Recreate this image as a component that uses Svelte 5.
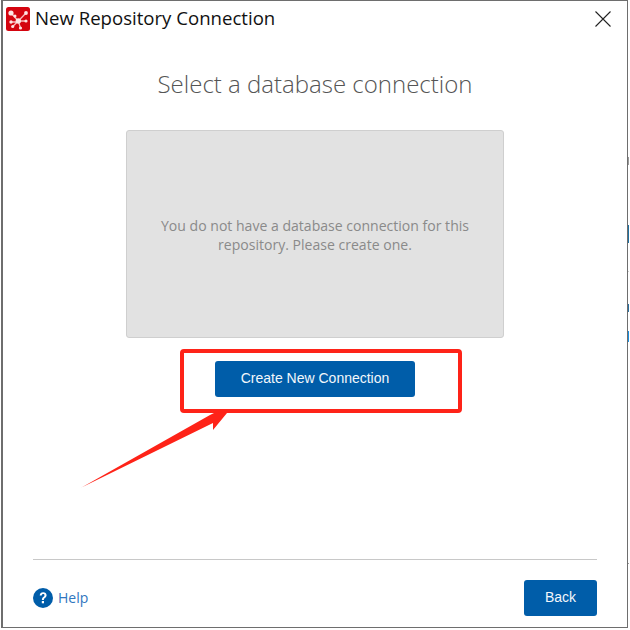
<script>
  const slivers = [
    { top: 157, height: 8, color: '#9a9a9a' },
    { top: 225, height: 18, color: '#1f6f9f' },
    { top: 271, height: 1, color: '#cccccc' },
    { top: 304, height: 8, color: '#2a6f9f' },
    { top: 331, height: 11, color: '#1a8fe0' },
    { top: 563, height: 1, color: '#999999' }
  ];
</script>

<div class="page">
  <div class="window">
    <header class="titlebar">
      <svg class="logo" viewBox="0 0 24 24" width="24" height="24" aria-hidden="true">
        <rect width="24" height="24" rx="2.5" fill="#d4040f" />
        <g stroke="#f8bcbc" stroke-width="1.3">
          <path d="M5 6 12.3 14M5 15H12.3M6.7 19.5 12.3 14M20 6 12.3 14M20 14H12.3M14.5 21 12.3 14" />
        </g>
        <g fill="#fde4e4">
          <circle cx="5" cy="6" r="2.6" />
          <circle cx="9" cy="9" r="1.5" />
          <circle cx="5" cy="15" r="1.7" />
          <circle cx="6.7" cy="19.5" r="1.6" />
          <circle cx="20" cy="6" r="1.9" />
          <circle cx="20" cy="14" r="1.6" />
          <circle cx="14.5" cy="21" r="1.6" />
          <circle cx="12.3" cy="14" r="2.7" />
        </g>
      </svg>
      <span class="title">New Repository Connection</span>
      <svg class="close" viewBox="0 0 16 16" width="16" height="16" aria-hidden="true">
        <path d="M.5.5 15.5 15.5M15.5.5.5 15.5" stroke="#222" stroke-width="1.1" fill="none" />
      </svg>
    </header>

    <main class="content">
      <h1>Select a database connection</h1>
      <div class="notice">
        <p>You do not have a database connection for this repository. Please create one.</p>
      </div>
      <button class="btn create">Create New Connection</button>
    </main>

    <footer class="footer">
      <a class="help" href="#help">
        <svg viewBox="0 0 20 20" width="20" height="20" aria-hidden="true">
          <circle cx="10" cy="10" r="10" fill="#005da9" />
          <path d="M6.7 7.6C6.8 5.5 8.2 4.3 10.2 4.3 12.2 4.3 13.6 5.5 13.6 7.2 13.6 8.5 12.9 9.2 11.9 9.9 11.1 10.5 10.9 10.9 10.9 11.9H8.9C8.9 10.4 9.3 9.7 10.3 9 11.1 8.4 11.5 8 11.5 7.3 11.5 6.5 11 6 10.2 6 9.3 6 8.8 6.6 8.7 7.6Z" fill="#fff" />
          <rect x="8.8" y="13" width="2.2" height="2.3" fill="#fff" />
        </svg>
        <span class="help-label">Help</span>
      </a>
      <button class="btn back">Back</button>
    </footer>
  </div>

  {#each slivers as s}
    <i class="sliver" style="top:{s.top}px;height:{s.height}px;background:{s.color}"></i>
  {/each}

  <div class="callout"></div>
  <svg class="arrow" viewBox="0 0 630 630" width="630" height="630" aria-hidden="true">
    <path d="M81.5 487.5 210 415 215 412.5 227 413 213 430 213 423Z" fill="#fe2318" />
  </svg>
</div>

<style>
  :global(body) {
    margin: 0;
    background: #fff;
  }

  .page {
    position: relative;
    width: 630px;
    height: 630px;
    overflow: hidden;
    background: #fff;
  }

  .window {
    box-sizing: border-box;
    display: flex;
    flex-direction: column;
    width: 627px;
    height: 628px;
    margin-left: 1px;
    border: 1px solid #6e6e6e;
    border-left-width: 2px;
    background: #fff;
  }

  .titlebar {
    display: flex;
    align-items: center;
    height: 35px;
    padding: 0 16px 0 3px;
    flex: none;
  }

  .logo {
    flex: none;
    margin-top: 1px;
  }

  .title {
    margin: -2px 0 0 5px;
    font: 18.6px "Open Sans", sans-serif;
    color: #111;
  }

  .close {
    margin-left: auto;
    margin-top: 0;
  }

  .content {
    flex: 1;
    display: flex;
    flex-direction: column;
    align-items: center;
  }

  h1 {
    margin: 30px 0 0;
    font: 300 24px/36px "Open Sans", sans-serif;
    color: #555;
  }

  .notice {
    box-sizing: border-box;
    display: flex;
    align-items: center;
    justify-content: center;
    width: 378px;
    height: 208px;
    margin-top: 28px;
    padding-top: 2px;
    border: 1px solid #cfcfcf;
    border-radius: 3px;
    background: #e2e2e2;
  }

  .notice p {
    width: 330px;
    margin: 0;
    text-align: center;
    font: 14.05px/19px "Open Sans", sans-serif;
    color: #8a8a8a;
  }

  .btn {
    border: 0;
    border-radius: 3px;
    background: #005da9;
    color: #f2f7fb;
    font: 14px "Liberation Sans", sans-serif;
    padding: 0 0 2px;
  }

  .create {
    width: 200px;
    height: 36px;
    margin-top: 23px;
  }

  .footer {
    box-sizing: border-box;
    display: flex;
    align-items: flex-end;
    justify-content: space-between;
    flex: none;
    height: 68px;
    margin: 0 30px;
    padding-bottom: 11px;
    border-top: 1px solid #c8c8c8;
  }

  .help {
    display: flex;
    align-items: center;
    gap: 5px;
    height: 36px;
    text-decoration: none;
    color: #2f76c0;
    font: 14px "Open Sans", sans-serif;
  }

  .help-label {
    margin-top: -2px;
  }

  .back {
    width: 73px;
    height: 36px;
  }

  .sliver {
    position: absolute;
    left: 628px;
    width: 1px;
  }

  .callout {
    position: absolute;
    box-sizing: border-box;
    left: 180px;
    top: 349px;
    width: 282px;
    height: 64px;
    border: 4px solid #fe2318;
    border-radius: 4px;
  }

  .arrow {
    position: absolute;
    left: 0;
    top: 0;
    pointer-events: none;
  }
</style>
